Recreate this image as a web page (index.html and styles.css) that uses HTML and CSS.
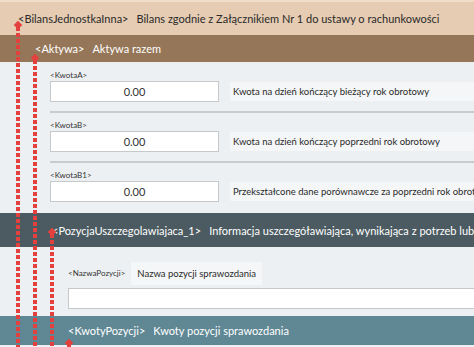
FILE: index.html
```html
<!DOCTYPE html>
<html lang="pl">
<head>
    <meta charset="UTF-8">
    <title>Bilans</title>
    <link rel="stylesheet" href="styles.css">
</head>
<body>
    <div class="tree">
        <div class="node lvl0">
            <span class="tag">&lt;BilansJednostkaInna&gt;</span>
            <span>Bilans zgodnie z Załącznikiem Nr 1 do ustawy o rachunkowości</span>
        </div>
        <div class="node lvl1">
            <span class="tag">&lt;Aktywa&gt;</span>
            <span>Aktywa razem</span>
        </div>
        <div class="fields fields-a">
            <div class="field">
                <div class="field-label">&lt;KwotaA&gt;</div>
                <div class="field-row">
                    <div class="amount">0.00</div>
                    <div class="desc">Kwota na dzień kończący bieżący rok obrotowy</div>
                </div>
            </div>
            <div class="field">
                <div class="field-label">&lt;KwotaB&gt;</div>
                <div class="field-row">
                    <div class="amount">0.00</div>
                    <div class="desc">Kwota na dzień kończący poprzedni rok obrotowy</div>
                </div>
            </div>
            <div class="field last">
                <div class="field-label">&lt;KwotaB1&gt;</div>
                <div class="field-row">
                    <div class="amount">0.00</div>
                    <div class="desc">Przekształcone dane porównawcze za poprzedni rok obrotowy</div>
                </div>
            </div>
        </div>
        <div class="node lvl2">
            <span class="tag">&lt;PozycjaUszczegolawiajaca_1&gt;</span>
            <span>Informacja uszczegóławiająca, wynikająca z potrzeb lub specyfiki jednostki</span>
        </div>
        <div class="fields fields-b">
            <div class="name-row">
                <span class="field-label">&lt;NazwaPozycji&gt;</span>
                <span class="desc short">Nazwa pozycji sprawozdania</span>
            </div>
            <div class="text-input"></div>
        </div>
        <div class="node lvl3">
            <span class="tag">&lt;KwotyPozycji&gt;</span>
            <span>Kwoty pozycji sprawozdania</span>
        </div>

        <div class="guide g0"></div>
        <div class="guide g1"></div>
        <div class="guide g2"></div>
        <div class="guide g3"></div>
    </div>
</body>
</html>
```
FILE: styles.css
```css
body {
    margin: 0;
    background-color: #edf0f2;
    font-family: 'Lato', 'Noto Sans', sans-serif;
    overflow: hidden;
}

.tree {
    position: relative;
    height: 347px;
    overflow: hidden;
}

.node {
    display: flex;
    align-items: center;
    gap: 8px;
    font-size: 11px;
    white-space: nowrap;
    overflow: hidden;
}

.lvl0 {
    height: 33px;
    padding-left: 18px;
    background-color: #e5ccb2;
    border-top: 2px solid #efdcc9;
    color: #2a2a2a;
}

.lvl1 {
    height: 27px;
    padding-left: 35px;
    background-color: #957658;
    color: #ffffff;
}

.lvl2 {
    height: 34px;
    padding-left: 52px;
    background-color: #4b5b61;
    color: #ffffff;
}

.lvl3 {
    height: 29px;
    padding-left: 68px;
    background-color: #5f8894;
    color: #ffffff;
}

.fields {
    background-color: #edf0f2;
}

.fields-a {
    padding: 8px 0 11px 50px;
}

.field {
    padding-bottom: 9px;
    margin-bottom: 7px;
    border-bottom: 2px solid #c9cccf;
}

.field.last {
    border-bottom: none;
    padding-bottom: 0;
    margin-bottom: 0;
}

.field-label {
    font-size: 8px;
    color: #333333;
    height: 11px;
    line-height: 11px;
}

.field-row {
    display: flex;
    align-items: center;
    gap: 11px;
}

.amount {
    width: 167px;
    height: 19px;
    line-height: 19px;
    background-color: #ffffff;
    border: 1px solid #c6c8ca;
    text-align: center;
    font-size: 11px;
    color: #333333;
}

.desc {
    flex: 1;
    height: 19px;
    line-height: 19px;
    padding-left: 3px;
    background-color: #f4f6f7;
    font-size: 9.5px;
    color: #2a2a2a;
    white-space: nowrap;
    overflow: hidden;
}

.fields-b {
    padding: 15px 0 7px 68px;
}

.name-row {
    display: flex;
    align-items: center;
    gap: 6px;
    height: 23px;
    margin-bottom: 3px;
}

.desc.short {
    flex: none;
    height: 23px;
    line-height: 23px;
    padding: 0 6px;
}

.text-input {
    height: 19px;
    background-color: #ffffff;
    border: 1px solid #c6c8ca;
    border-right: none;
}

.guide {
    position: absolute;
    bottom: 0;
    width: 4px;
    background: repeating-linear-gradient(to bottom, #e4403e 0, #e4403e 4px, transparent 4px, transparent 6px);
}

.guide::before {
    content: "";
    position: absolute;
    top: -5px;
    left: -1px;
    width: 6px;
    height: 6px;
    background-color: #e4403e;
    transform: rotate(45deg);
}

.g0 { left: 16px; top: 27px; }
.g1 { left: 33px; top: 60px; }
.g2 { left: 50px; top: 234px; }
.g3 { left: 67px; top: 345px; }
```
